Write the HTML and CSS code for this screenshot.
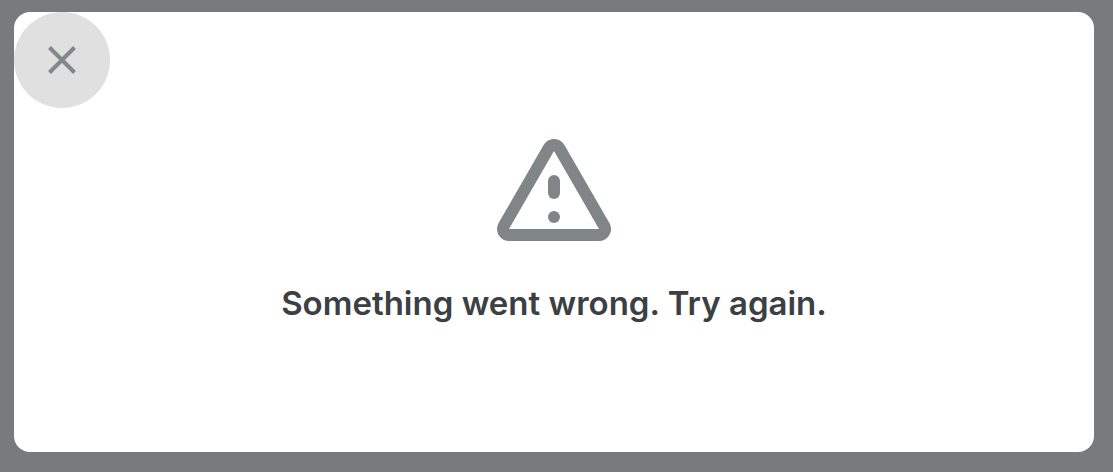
FILE: index.html
```
<!DOCTYPE html>
<html lang="en">
    <head>
        <meta charset="utf-8">
        <title>Something went wrong</title>
        <link rel="stylesheet" href="styles.css">
    </head>
    <body>
        <div class="dialog" role="alertdialog" aria-labelledby="message">
            <button class="close" type="button" aria-label="Close">
                <svg width="28" height="28" viewBox="0 0 28 28">
                    <path class="cross" d="M1.5 1.5L26.5 26.5M26.5 1.5L1.5 26.5"/>
                </svg>
            </button>
            <div class="content">
                <svg class="warning" width="114" height="102" viewBox="0 0 114 102" aria-hidden="true">
                    <path class="triangle" d="M57 12L102 90H12Z"/>
                    <path class="mark" d="M57 42V54"/>
                    <circle class="dot" cx="57" cy="78" r="6"/>
                </svg>
                <p class="message" id="message">Something went wrong. Try again.</p>
            </div>
        </div>
    </body>
</html>
```
FILE: styles.css
```
* {
    box-sizing: border-box;
}

body {
    display: flex;
    min-height: 100vh;
    margin: 0;
    padding: 12px 19px 20px 14px;
    background: #797a7c;
    font-family: Inter, "Liberation Sans", sans-serif;
    color: #3c4043;
}

.dialog {
    flex: 1;
    border-radius: 16px;
    background: #fff;
}

.close {
    display: flex;
    align-items: center;
    justify-content: center;
    width: 96px;
    height: 96px;
    padding: 0;
    border: 0;
    border-radius: 50%;
    background: #e0e0e0;
    cursor: pointer;
}

.cross {
    stroke: #82888a;
    stroke-width: 4px;
}

.content {
    display: flex;
    flex-direction: column;
    align-items: center;
    padding: 31px 24px;
}

.triangle {
    fill: #fff;
    stroke: #808688;
    stroke-width: 24px;
    stroke-linejoin: round;
    paint-order: stroke;
}

.mark {
    stroke: #808688;
    stroke-width: 12px;
    stroke-linecap: round;
}

.dot {
    fill: #808688;
}

.message {
    margin: 40px 0 0;
    font-size: 33px;
    font-weight: 600;
    line-height: 44px;
    text-align: center;
}
```
